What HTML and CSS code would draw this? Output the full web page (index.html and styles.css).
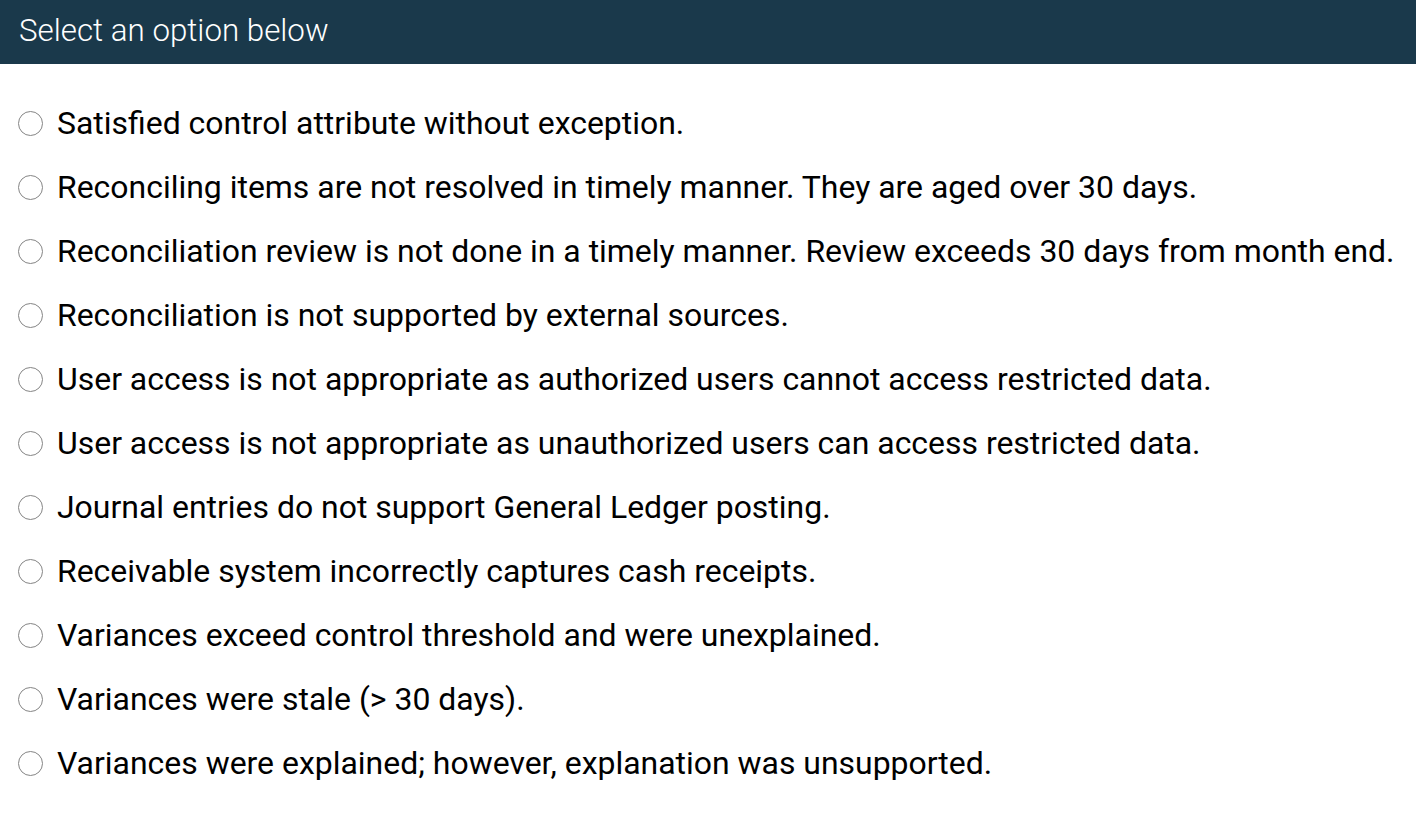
FILE: index.html
```html
<!DOCTYPE html>
<html>
<head>
<title>Select an option</title>
<link rel="stylesheet" href="styles.css">
</head>
<body>

  <div class="header">
    Select an option below
  </div>

  <form class="options">
    <label class="option"><input type="radio" name="opt"><span>Satisfied control attribute without exception.</span></label>
    <label class="option"><input type="radio" name="opt"><span>Reconciling items are not resolved in timely manner. They are aged over 30 days.</span></label>
    <label class="option"><input type="radio" name="opt"><span>Reconciliation review is not done in a timely manner. Review exceeds 30 days from month end.</span></label>
    <label class="option"><input type="radio" name="opt"><span>Reconciliation is not supported by external sources.</span></label>
    <label class="option"><input type="radio" name="opt"><span>User access is not appropriate as authorized users cannot access restricted data.</span></label>
    <label class="option"><input type="radio" name="opt"><span>User access is not appropriate as unauthorized users can access restricted data.</span></label>
    <label class="option"><input type="radio" name="opt"><span>Journal entries do not support General Ledger posting.</span></label>
    <label class="option"><input type="radio" name="opt"><span>Receivable system incorrectly captures cash receipts.</span></label>
    <label class="option"><input type="radio" name="opt"><span>Variances exceed control threshold and were unexplained.</span></label>
    <label class="option"><input type="radio" name="opt"><span>Variances were stale (&gt; 30 days).</span></label>
    <label class="option"><input type="radio" name="opt"><span>Variances were explained; however, explanation was unsupported.</span></label>
  </form>

</body>
</html>
```

FILE: styles.css
```css
body {
    margin: 0;
    background: #fff;
    font-family: Roboto, "Liberation Sans", sans-serif;
}

.header {
    background-color: #1a394b;
    color: #fff;
    height: 64px;
    box-sizing: border-box;
    padding: 0 0 3px 19px;
    display: flex;
    align-items: center;
    font-size: 31.3px;
    font-weight: 300;
}

.options {
    display: flex;
    flex-direction: column;
    padding-top: 27px;
}

.option {
    height: 64px;
    display: flex;
    align-items: center;
    padding-left: 18px;
    font-size: 31.95px;
    color: #000;
    cursor: pointer;
}

.option input {
    -webkit-appearance: none;
    appearance: none;
    margin: 0 14px 0 0;
    width: 25px;
    height: 25px;
    border: 1.6px solid #858585;
    border-radius: 50%;
    background: #fff;
    flex-shrink: 0;
}

.option input:checked {
    background: radial-gradient(circle, #1a394b 45%, #fff 50%);
}
```
